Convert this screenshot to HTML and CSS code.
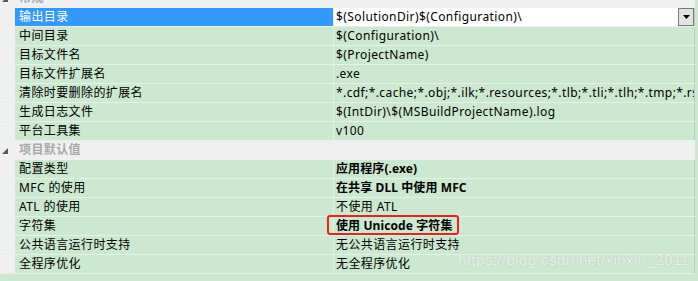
FILE: index.html
```html
<!DOCTYPE html>
<html lang="zh-CN">
<head>
  <meta charset="UTF-8" />
  <title>属性页</title>
  <link rel="stylesheet" href="styles.css">
</head>
<body>

  <div class="grid">
    <div class="cat">
      <div class="gutter"><svg class="toggle" width="6" height="6" viewBox="0 0 6 6"><polygon points="6,0 6,6 0,6" /></svg></div>
      <div class="cat-name">常规</div>
    </div>

    <div class="row selected">
      <div class="gutter"></div>
      <div class="name">输出目录</div>
      <div class="value edit">
        <span class="text">$(SolutionDir)$(Configuration)\</span>
        <span class="drop"><svg width="7" height="4" viewBox="0 0 7 4"><polygon points="0,0 7,0 3.5,4" /></svg></span>
      </div>
    </div>
    <div class="row"><div class="gutter"></div><div class="name">中间目录</div><div class="value">$(Configuration)\</div></div>
    <div class="row"><div class="gutter"></div><div class="name">目标文件名</div><div class="value">$(ProjectName)</div></div>
    <div class="row"><div class="gutter"></div><div class="name">目标文件扩展名</div><div class="value">.exe</div></div>
    <div class="row"><div class="gutter"></div><div class="name">清除时要删除的扩展名</div><div class="value">*.cdf;*.cache;*.obj;*.ilk;*.resources;*.tlb;*.tli;*.tlh;*.tmp;*.rsp;*.pgc;*.pgd;*.meta;*.tlog;*.manifest;*.res</div></div>
    <div class="row"><div class="gutter"></div><div class="name">生成日志文件</div><div class="value">$(IntDir)\$(MSBuildProjectName).log</div></div>
    <div class="row"><div class="gutter"></div><div class="name">平台工具集</div><div class="value">v100</div></div>

    <div class="cat">
      <div class="gutter"><svg class="toggle" width="6" height="6" viewBox="0 0 6 6"><polygon points="6,0 6,6 0,6" /></svg></div>
      <div class="cat-name">项目默认值</div>
    </div>

    <div class="row"><div class="gutter"></div><div class="name">配置类型</div><div class="value bold">应用程序(.exe)</div></div>
    <div class="row"><div class="gutter"></div><div class="name">MFC 的使用</div><div class="value bold">在共享 DLL 中使用 MFC</div></div>
    <div class="row"><div class="gutter"></div><div class="name">ATL 的使用</div><div class="value">不使用 ATL</div></div>
    <div class="row"><div class="gutter"></div><div class="name">字符集</div><div class="value bold"><span class="marked">使用 Unicode 字符集</span></div></div>
    <div class="row"><div class="gutter"></div><div class="name">公共语言运行时支持</div><div class="value">无公共语言运行时支持</div></div>
    <div class="row"><div class="gutter"></div><div class="name">全程序优化</div><div class="value">无全程序优化</div></div>
  </div>

  <div class="watermark">https://blog.csdn.net/xinxin_2011</div>

</body>
</html>
```

FILE: styles.css
```css
body {
  margin: 0;
  height: 281px;
  overflow: hidden;
  position: relative;
  background: #cde8d0;
  font-family: "Noto Sans", "Noto Sans CJK SC", sans-serif;
  font-size: 12px;
  letter-spacing: 0.4px;
  color: #000;
}

.grid {
  margin-top: -11px;
  width: 695px;
}

.row,
.cat {
  display: flex;
  height: 18px;
  border-bottom: 1px solid #e6f2e7;
}

.gutter {
  width: 15px;
  flex: none;
  background: #f0f0f0;
  position: relative;
}

.toggle {
  position: absolute;
  left: 2px;
  top: 7px;
  fill: #5a5a5a;
}

.cat {
  background: #f0f0f0;
  border-bottom-color: #f0f0f0;
}

.cat-name {
  padding-left: 4px;
  line-height: 18px;
  font-weight: bold;
  color: #a8a8a8;
}

.name {
  width: 314px;
  flex: none;
  padding-left: 4px;
  line-height: 18px;
  white-space: nowrap;
}

.value {
  flex: 1;
  min-width: 0;
  padding-left: 2px;
  border-left: 1px solid #e6f2e7;
  border-right: 1px solid #b9ccbb;
  line-height: 18px;
  white-space: nowrap;
  overflow: hidden;
  position: relative;
}

.bold {
  font-weight: bold;
  letter-spacing: 0.1px;
}

.selected .name {
  background: #3399ff;
  color: #fff;
}

.selected .value {
  background: #fff;
  display: flex;
  align-items: center;
}

.edit .text {
  flex: 1;
}

.drop {
  width: 14px;
  height: 16px;
  border: 1px solid #7a7a7a;
  background: #e2e2e2;
  display: flex;
  align-items: center;
  justify-content: center;
}

.marked {
  position: relative;
}

.marked::before {
  content: "";
  position: absolute;
  left: -9px;
  right: -6px;
  top: -2px;
  bottom: -1px;
  border: 2.5px solid #e8231c;
  border-radius: 3px;
}

.value:has(.marked) {
  overflow: visible;
}

.watermark {
  position: absolute;
  left: 458px;
  top: 251px;
  font-family: "Liberation Sans", Arial, sans-serif;
  font-size: 15.5px;
  letter-spacing: 0.2px;
  color: rgba(255, 255, 255, 0.75);
  text-shadow: 0 0 1px rgba(130, 130, 130, 0.45);
  white-space: nowrap;
}
```
